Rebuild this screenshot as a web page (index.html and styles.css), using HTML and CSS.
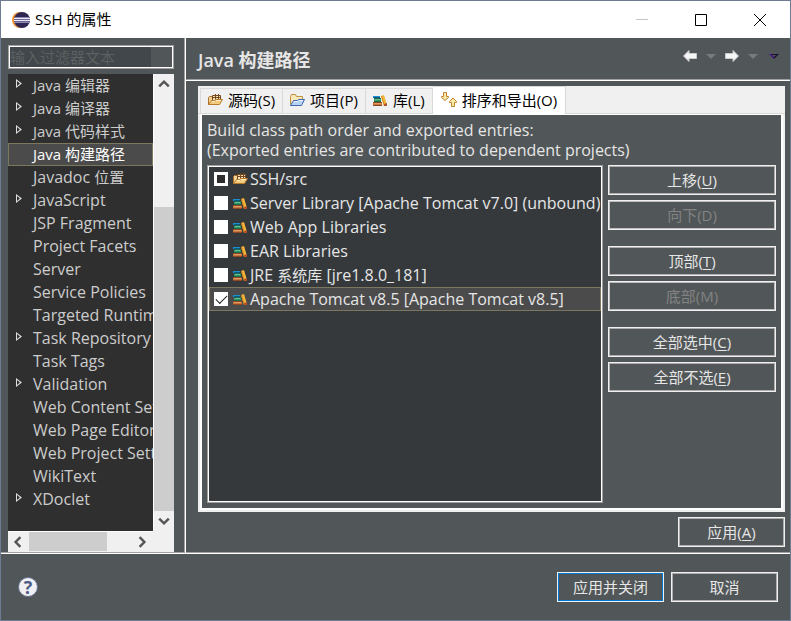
FILE: index.html
```html
<!DOCTYPE html>
<html lang="zh-CN">
<head>
<meta charset="utf-8">
<title>SSH 的属性</title>
<link rel="stylesheet" href="styles.css">
</head>
<body>
<svg class="defs" aria-hidden="true">
  <symbol id="books" viewBox="0 0 16 16">
    <path fill="#1c8fd0" d="M1 4h7v2H1z"/><path fill="#13548a" d="M2 5h6v1H2z"/>
    <path fill="#2f9a68" d="M2 6h7v4H2z"/><path fill="#1c6a4a" d="M2 6h7v1H2zM2 9h7v1H2z"/><path fill="#63bd91" d="M3 7h5v1H3z"/>
    <path fill="#c4763d" d="M1 10h9v4H1z"/><path fill="#8d4826" d="M1 10h9v1H1zM1 13h9v1H1z"/><path fill="#e09a61" d="M2 11h7v1H2z"/>
    <path fill="#f2b53a" d="M9 4l3-1 3 10-3 1z"/><path fill="#d98a20" d="M9 4h1l3 10h-1z"/><path fill="#b5542a" d="M12 12l3-1v3h-3z"/>
  </symbol>
  <symbol id="source" viewBox="0 0 16 16">
    <path fill="#f3d391" stroke="#a9712b" d="M1.500 12.500v-7l1-1h3l1 1h7v4"/>
    <path fill="#f7e2b4" stroke="#744820" d="M5.500 3.500h8v5h-8z"/><path fill="none" stroke="#744820" d="M8.500 2v6M11.500 2v6M5 5.500h9"/>
    <path fill="#f5cb7e" stroke="#b87a2d" d="M1.500 12.500l3-4h3l1-1h7l-3 5z"/><path stroke="#fff0cb" d="M5 9.500h3l1-1h5"/>
  </symbol>
  <symbol id="project" viewBox="0 0 16 16">
    <path fill="#f8e7b8" stroke="#c09240" d="M1.500 12.500v-8l1-2h4l1 2h6v4"/>
    <path fill="#b6d2f4" stroke="#3f67ae" d="M1.500 13.500l3-5h4l1-1h6l-3 6z"/><path stroke="#edf6ff" d="M5 9.500h4l1-1h4"/>
  </symbol>
  <symbol id="order" viewBox="0 0 16 16">
    <path fill="#fae8a8" stroke="#bd852d" d="M2.500 .500h3v4h2v1l-3.500 3-3.500-3v-1h2z"/>
    <path fill="#fae8a8" stroke="#bd852d" d="M10.500 14.500h3v-4h2v-1l-3.500-3.500-3.500 3.500v1h2z"/>
  </symbol>
</svg>

<header class="titlebar">
  <svg class="logo" viewBox="0 0 18 18" aria-hidden="true">
    <circle cx="8" cy="9" r="8" fill="#ef942c"/><circle cx="10" cy="9" r="8" fill="#302653"/>
    <path fill="#8f88b0" d="M3 6h14v1H3zM2 11h16v1H2z"/><path fill="#e8e7f2" d="M2 7h16v1H2zM2 9h16v1H2z"/><path fill="#6d6697" d="M2 8h16v1H2zM2 10h16v1H2z"/>
  </svg>
  <span class="window-title">SSH 的属性</span>
  <button class="window-btn" aria-label="最小化" disabled><svg viewBox="0 0 12 12"><path stroke="#c5c5c5" d="M0 5.500h12"/></svg></button>
  <button class="window-btn" aria-label="最大化"><svg viewBox="0 0 12 12"><path fill="none" stroke="#000" d="M.500 .500h11v11H.500z"/></svg></button>
  <button class="window-btn" aria-label="关闭"><svg viewBox="0 0 12 12"><path stroke="#000" d="M0 0l12 12M12 0L0 12"/></svg></button>
</header>

<div class="main">
  <nav class="sidebar">
    <input class="filter" type="text" placeholder="输入过滤器文本" aria-label="输入过滤器文本">
    <div class="tree-box">
      <ul class="tree">
        <li class="branch han">Java 编辑器</li>
        <li class="branch han">Java 编译器</li>
        <li class="branch han">Java 代码样式</li>
        <li class="current han">Java 构建路径</li>
        <li>Javadoc <span class="han">位置</span></li>
        <li class="branch">JavaScript</li>
        <li>JSP Fragment</li>
        <li>Project Facets</li>
        <li>Server</li>
        <li>Service Policies</li>
        <li>Targeted Runtimes</li>
        <li class="branch">Task Repository</li>
        <li>Task Tags</li>
        <li class="branch">Validation</li>
        <li>Web Content Settings</li>
        <li>Web Page Editor</li>
        <li>Web Project Settings</li>
        <li>WikiText</li>
        <li class="branch">XDoclet</li>
      </ul>
      <div class="vscroll">
        <button aria-label="向上滚动"><svg viewBox="0 0 10 10"><path d="M1 7l4-4 4 4"/></svg></button>
        <div class="vthumb"></div>
        <button aria-label="向下滚动"><svg viewBox="0 0 10 10"><path d="M1 3l4 4 4-4"/></svg></button>
      </div>
      <div class="hscroll">
        <button aria-label="向左滚动"><svg viewBox="0 0 10 10"><path d="M7 1L3 5l4 4"/></svg></button>
        <div class="hthumb"></div>
        <button aria-label="向右滚动"><svg viewBox="0 0 10 10"><path d="M3 1l4 4-4 4"/></svg></button>
      </div>
    </div>
  </nav>

  <main class="page">
    <div class="page-head">
      <h1>Java 构建路径</h1>
      <div class="history">
        <button aria-label="后退"><svg class="arrow" viewBox="0 0 14 12"><path fill="#f6f6f6" stroke="#c9c9c9" d="M.500 6L6 .500v3h7.500v5H6v3z"/></svg></button>
        <button aria-label="后退历史"><svg class="drop" viewBox="0 0 10 5"><path fill="#777b7d" d="M0 0h10L5 5z"/></svg></button>
        <button aria-label="前进"><svg class="arrow" viewBox="0 0 14 12"><path fill="#f6f6f6" stroke="#c9c9c9" d="M13.500 6L8 .500v3H.500v5H8v3z"/></svg></button>
        <button aria-label="前进历史"><svg class="drop" viewBox="0 0 10 5"><path fill="#777b7d" d="M0 0h10L5 5z"/></svg></button>
      </div>
      <button aria-label="菜单"><svg class="drop" viewBox="0 0 10 5"><path fill="#1c1030" d="M0 0h10L5 5z"/><path fill="#53259a" d="M0 0h2l3 4v1z"/><path fill="#5a5560" d="M3 1h4L5 3z"/></svg></button>
    </div>
    <div class="page-body">
      <section class="folder">
        <div class="tabs" role="tablist">
          <button role="tab"><svg class="icon"><use href="#source"/></svg>源码(S)</button>
          <button role="tab"><svg class="icon"><use href="#project"/></svg>项目(P)</button>
          <button role="tab"><svg class="icon"><use href="#books"/></svg>库(L)</button>
          <button role="tab" class="active" aria-selected="true"><svg class="icon"><use href="#order"/></svg>排序和导出(O)</button>
        </div>
        <div class="panel">
          <p class="intro">Build class path order and exported entries:<br>(Exported entries are contributed to dependent projects)</p>
          <div class="columns">
            <div class="entries">
              <label class="entry"><input type="checkbox" class="partial"><svg class="icon"><use href="#source"/></svg>SSH/src</label>
              <label class="entry"><input type="checkbox"><svg class="icon"><use href="#books"/></svg>Server Library [Apache Tomcat v7.0] (unbound)</label>
              <label class="entry"><input type="checkbox"><svg class="icon"><use href="#books"/></svg>Web App Libraries</label>
              <label class="entry"><input type="checkbox"><svg class="icon"><use href="#books"/></svg>EAR Libraries</label>
              <label class="entry"><input type="checkbox"><svg class="icon"><use href="#books"/></svg><span>JRE <span class="han">系统库</span> [jre1.8.0_181]</span></label>
              <label class="entry current"><input type="checkbox" checked><svg class="icon"><use href="#books"/></svg>Apache Tomcat v8.5 [Apache Tomcat v8.5]</label>
            </div>
            <div class="actions">
              <div class="pair"><button class="btn">上移(<u>U</u>)</button><button class="btn" disabled>向下(D)</button></div>
              <div class="pair"><button class="btn">顶部(<u>T</u>)</button><button class="btn" disabled>底部(M)</button></div>
              <div class="pair"><button class="btn">全部选中(<u>C</u>)</button><button class="btn">全部不选(<u>E</u>)</button></div>
            </div>
          </div>
        </div>
      </section>
      <button class="btn dialog-btn apply">应用(<u>A</u>)</button>
    </div>
  </main>
</div>

<footer class="footer">
  <button class="help" aria-label="帮助">?</button>
  <button class="btn dialog-btn default">应用并关闭</button>
  <button class="btn dialog-btn">取消</button>
</footer>
</body>
</html>
```
FILE: styles.css
```css
* { box-sizing: border-box; }

body {
  margin: 0;
  height: 100vh;
  display: flex;
  flex-direction: column;
  border: 1px solid #6d7b93;
  background: #515658;
  color: #e6e6e6;
  font: 15px/20px "Open Sans", "Noto Sans CJK SC", sans-serif;
}

button, input { font: inherit; color: inherit; }
button { margin: 0; padding: 0; border: 0; background: none; }
svg { display: block; }
.defs { position: absolute; width: 0; height: 0; }
.icon { width: 16px; height: 16px; flex: none; }

.titlebar { display: flex; flex: none; height: 37px; background: #fff; color: #000; align-items: center; padding-left: 11px; }
.logo { width: 18px; height: 18px; margin-right: 5px; }
.window-title { flex: 1; padding-bottom: 2px; }
.window-btn { width: 59px; height: 37px; display: grid; place-items: center; }
.window-btn:last-child { width: 60px; }
.window-btn svg { width: 12px; height: 12px; }

.main { flex: 1; min-height: 0; display: flex; border-bottom: 1px solid #fff; box-shadow: inset 0 -1px #a0a0a0; }

.sidebar { width: 185px; flex: none; display: flex; flex-direction: column; gap: 5px; padding: 7px 11px 1px 7px; border-right: 1px solid #fff; box-shadow: inset -1px 0 #a0a0a0; }
.filter { height: 24px; width: 100%; padding: 0 1px; border: 1px solid #a0a0a0; outline: 1px solid #fff; outline-offset: -2px; background: linear-gradient(to right, #41474a 142px, #515658 142px); }
.filter::placeholder { color: #5c6163; opacity: 1; }
.tree-box { flex: 1; min-height: 0; display: grid; grid-template: minmax(0, 1fr) 21px / minmax(0, 1fr) 21px; background: #f0f0f0; }
.tree { margin: 0; padding: 0; list-style: none; overflow: hidden; background: #2f2f2f; color: #ccc; font-size: 16px; }
.tree li { height: 23px; padding-left: 25px; line-height: 23px; white-space: nowrap; position: relative; }
.tree .current { background: #4b4b4b; color: #fff; box-shadow: inset 0 0 0 1px #7c785f; }
.han { font-size: 15px; }
.branch::before { content: ""; position: absolute; left: 8px; top: 5px; width: 6px; height: 9px; background: #ddd; clip-path: polygon(0 0, 100% 50%, 0 100%); }
.branch::after { content: ""; position: absolute; left: 9px; top: 7px; width: 3px; height: 5px; background: #2f2f2f; clip-path: polygon(0 0, 100% 50%, 0 100%); }

.vscroll { display: flex; flex-direction: column; justify-content: space-between; border-left: 1px solid #fff; }
.vscroll button, .hscroll button { width: 20px; height: 20px; display: grid; place-items: center; }
.vscroll svg, .hscroll svg { width: 12px; height: 12px; fill: none; stroke: #555; stroke-width: 2; }
.vthumb { flex: 1; margin: 113px 0 0; background: #cdcdcd; }
.hscroll { display: flex; align-items: stretch; border-top: 1px solid #fff; }
.hthumb { width: 78px; margin: 0 25px 1px 1px; background: #cdcdcd; }

.page { flex: 1; min-width: 0; display: flex; flex-direction: column; }
.page-head { height: 43px; flex: none; display: flex; align-items: flex-start; padding: 10px 11px 0 12px; border-bottom: 1px solid #fff; box-shadow: inset 0 -1px #a0a0a0; }
.page-head h1 { flex: 1; margin: 0; font-size: 18px; line-height: 24px; font-weight: 600; }
.page-head button { height: 16px; display: flex; align-items: center; }
.history { display: flex; gap: 9px; margin-right: 11px; }
.arrow { width: 14px; height: 12px; }
.drop { width: 10px; height: 5px; }

.page-body { flex: 1; min-height: 0; display: flex; flex-direction: column; align-items: flex-end; gap: 5px; padding: 5px 5px 6px 12px; }
.folder { flex: 1; width: 100%; min-height: 0; display: flex; flex-direction: column; background: #f0f0f0; }
.tabs { display: flex; height: 28px; align-items: flex-end; padding-left: 2px; border-bottom: 1px solid #d9d9d9; }
.tabs button { height: 25px; display: flex; align-items: center; gap: 5px; padding: 0 7px 2px 6px; border: 1px solid #d9d9d9; border-width: 1px 1px 0 0; color: #000; white-space: nowrap; }
.tabs button:first-child { border-left-width: 1px; }
.tabs .active { height: 28px; padding: 0 8px 2px; margin-bottom: -1px; background: #fff; }
.panel { flex: 1; min-height: 0; display: flex; flex-direction: column; margin: 0 2px 2px; padding: 5px; background: #515658; border: 2px solid #fff; border-top-width: 1px; }
.intro { margin: 0 0 5px; font-size: 16px; }
.columns { flex: 1; min-height: 0; display: flex; gap: 5px; }
.entries { flex: 1; min-width: 0; border: 1px solid #a0a0a0; box-shadow: inset 0 0 0 1px #fff; padding: 1px; background: #35393c; font-size: 16px; }
.entry { height: 24px; display: flex; align-items: center; padding-left: 5px; white-space: nowrap; }
.entry .icon { margin: 0 2px 0 4px; }
.entry.current { background: #4b4b4b; box-shadow: inset 0 0 0 1px #7c785f; }
.entry input { appearance: none; flex: none; width: 14px; height: 14px; margin: 0; background: #fff; display: grid; place-items: center; }
.entry .partial::before { content: ""; width: 8px; height: 8px; background: #2f2f2f; }
.entry input:checked::before { content: ""; width: 10px; height: 5px; margin-top: -3px; border: solid #222; border-width: 0 0 1px 1px; transform: rotate(-45deg); }

.actions { width: 168px; flex: none; display: flex; flex-direction: column; gap: 16px; }
.pair { display: flex; flex-direction: column; gap: 5px; }
.btn { height: 30px; border: 1px solid #f0f0f0; box-shadow: inset 0 0 0 1px #adadad; text-align: center; }
.btn:disabled { color: #838383; box-shadow: inset 0 0 0 1px #bfbfbf; }
.btn u { text-underline-offset: 2px; }
.dialog-btn { width: 107px; flex: none; }
.btn.default { box-shadow: inset 0 0 0 1px #0078d7; }

.footer { height: 66px; flex: none; display: flex; align-items: center; gap: 7px; padding: 0 12px 0 17px; }
.help { width: 20px; height: 20px; margin-right: auto; border-radius: 50%; border: 1px solid #65728f; background: #f0f0f4; color: #4d5c85; font-size: 18px; font-weight: 700; line-height: 18px; }
```
